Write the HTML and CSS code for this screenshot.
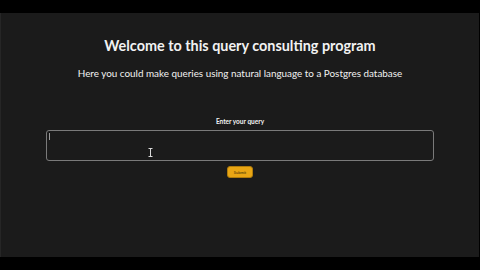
FILE: index.html
```html
<!DOCTYPE html>
<html lang="en">

<head>
    <meta charset="UTF-8">
    <meta name="viewport" content="width=device-width, initial-scale=1.0">
    <title>Query consulting</title>
    <link rel="stylesheet" href="styles.css">
</head>

<body>
    <div class="frame">
        <div class="app">
            <h1 class="title">Welcome to this query consulting program</h1>
            <p class="subtitle">Here you could make queries using natural language to a Postgres database</p>

            <form class="query-form" onsubmit="return false;">
                <label class="query-label" for="query">Enter your query</label>
                <div class="query-box">
                    <span class="caret"></span>
                    <textarea id="query" class="query-input"></textarea>
                    <svg class="ibeam" width="5" height="9" viewBox="0 0 5 9">
                        <path d="M0.5 0.5h4M2.5 0.5v8M0.5 8.5h4" stroke="#d8d8d8" stroke-width="1" fill="none"/>
                    </svg>
                </div>
                <button class="submit" type="submit">Submit</button>
            </form>
        </div>
    </div>
</body>

</html>
```

FILE: styles.css
```css
html,
body {
    margin: 0;
    padding: 0;
    background-color: #000;
}

.frame {
    height: 270px;
    padding: 13px 0;
    box-sizing: border-box;
}

.app {
    height: 244px;
    margin: 0 1px 0 0;
    background-color: #1b1b1b;
    border-left: 1px solid #262626;
    font-family: "Lato", "Open Sans", sans-serif;
    color: #f2f2f2;
    text-align: center;
    overflow: hidden;
}

.title {
    margin: 0;
    padding-top: 24px;
    font-size: 14.4px;
    font-weight: 700;
    line-height: 18px;
}

.subtitle {
    margin: 11px 0 0;
    font-size: 9.9px;
    line-height: 14px;
}

.query-form {
    display: flex;
    flex-direction: column;
    align-items: center;
    margin-top: 37px;
}

.query-label {
    font-size: 6.5px;
    font-weight: 700;
    line-height: 9px;
}

.query-box {
    position: relative;
    margin-top: 4px;
    width: 388px;
    height: 31px;
    box-sizing: border-box;
    border: 1.5px solid #7a7a7a;
    border-radius: 3px;
}

.query-input {
    display: block;
    width: 100%;
    height: 100%;
    border: none;
    background: transparent;
    resize: none;
    outline: none;
}

.caret {
    position: absolute;
    left: 2px;
    top: 2px;
    width: 1px;
    height: 7px;
    background-color: #9a9a9a;
}

.ibeam {
    position: absolute;
    left: 101px;
    top: 17px;
}

.submit {
    margin-top: 5px;
    width: 26px;
    height: 12px;
    padding: 0;
    font-family: "Lato", sans-serif;
    font-size: 4px;
    color: #3a2a05;
    background-color: #e9a614;
    border: 1px solid #b07c0c;
    border-radius: 3px;
}
```
